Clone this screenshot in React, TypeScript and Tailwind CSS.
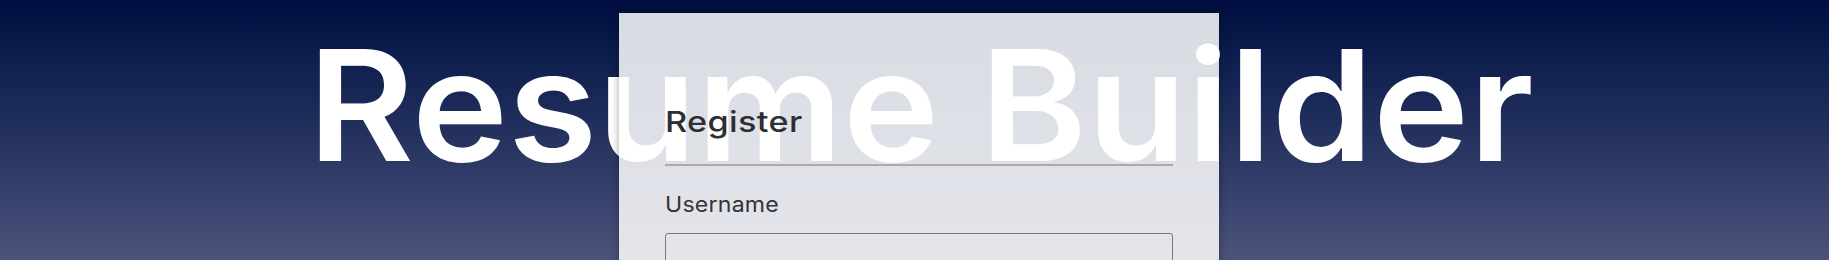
export default function App() {
  return (
    <div
      className="relative h-[260px] w-full overflow-hidden bg-gradient-to-b from-[#010d40] to-[#4c537b]"
      style={{ fontFamily: 'Inter, "Noto Sans", sans-serif' }}
    >
      <h1 className="pointer-events-none absolute left-0 right-0 top-[28px] pl-[12px] text-center text-[154px] font-semibold leading-none text-white">
        <span className="inline-block scale-x-[1.055]">Resume Builder</span>
      </h1>
      <div className="flex justify-center pl-[9px] pt-[13px]">
        <div className="relative w-[600px] bg-white/85 px-[46px] pt-[91px] shadow-[0_0_8px_rgba(0,0,0,0.35)]">
          <h2 className="text-[29px] font-medium leading-[36px] tracking-[0.3px] text-[#2e2e33]">
            <span className="inline-block origin-left scale-x-[1.18]">Register</span>
          </h2>
          <div className="mt-[24px] h-[2px] bg-[#a9a9b1]" />
          <label className="mt-[25px] block text-[21px] leading-[28px] tracking-[0.2px] text-[#333338]">
            <span className="inline-block origin-left scale-x-[1.1]">Username</span>
          </label>
          <input className="mt-[14px] block h-[44px] w-full rounded-[3px] border border-[#77777d] bg-transparent" />
          <div className="h-[200px]" />
        </div>
      </div>
    </div>
  );
}
